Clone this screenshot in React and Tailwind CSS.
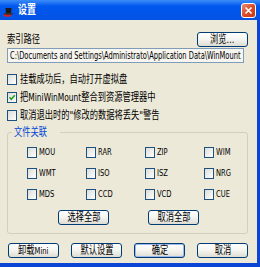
import React from 'react'

const FONT = "font-['Tahoma','DejaVu_Sans','Noto_Sans_CJK_SC',sans-serif]"

function T({ children, className = '', center = false, narrow = false }) {
  return (
    <span
      className={`inline-block whitespace-nowrap leading-none ${narrow ? 'scale-x-[0.67]' : 'scale-x-[0.75]'} ${center ? 'origin-center' : 'origin-left'} ${className}`}
    >
      {children}
    </span>
  )
}

function Check({ checked = false }) {
  return (
    <span className="relative w-[10px] h-[11px] shrink-0 border border-[#1C5180] bg-gradient-to-br from-[#DCDCD7] to-white">
      {checked && (
        <svg viewBox="0 0 8 9" className="absolute inset-0 w-[8px] h-[9px]">
          <path d="M1.5 4.2 L3.3 6.2 L6.8 2.2" stroke="#21A121" strokeWidth="1.6" fill="none" />
        </svg>
      )}
    </span>
  )
}

function Btn({ children, focused = false, className = '' }) {
  return (
    <div
      className={`h-[15px] w-[51px] rounded-[3px] border border-[#003C74] bg-gradient-to-b from-white via-[#F4F4F0] to-[#DEDCD3] flex items-center justify-center text-[11px] text-black ${focused ? 'shadow-[inset_0_0_0_1px_#9DB8EC]' : ''} ${className}`}
    >
      <T center>{children}</T>
    </div>
  )
}

function Row({ checked, children }) {
  return (
    <div className="h-[18px] flex items-center pl-[7px] gap-[3px]">
      <Check checked={checked} />
      <T className="text-[11px] text-black">{children}</T>
    </div>
  )
}

const TYPES = ['MOU', 'RAR', 'ZIP', 'WIM', 'WMT', 'ISO', 'ISZ', 'NRG', 'MDS', 'CCD', 'VCD', 'CUE']

export default function App() {
  return (
    <div className={`w-[260px] h-[267px] flex flex-col bg-[#0B45D6] overflow-hidden ${FONT}`}>
      {/* Title bar */}
      <div className="h-[20px] shrink-0 flex items-center pl-[3px] pr-[4px] bg-gradient-to-b from-[#3C8CF8] via-[#0058EE] via-30% to-[#0352E4]">
        <svg viewBox="0 0 11 10" className="w-[11px] h-[10px] mt-[3px]">
          <ellipse cx="4.5" cy="8" rx="4" ry="1.8" fill="#D42020" />
          <path d="M2.5 1 L8.5 1 L8 7.5 L3 7.5 Z" fill="#1A1A1A" />
          <rect x="1" y="6" width="9" height="1.5" fill="#333" />
        </svg>
        <T className="ml-[4px] text-[12px] font-bold text-white">设置</T>
        <div className="ml-auto w-[15px] h-[15px] rounded-[3px] border border-white bg-gradient-to-br from-[#E98A6F] via-[#DC4A25] to-[#C53A18] flex items-center justify-center">
          <svg viewBox="0 0 9 9" className="w-[9px] h-[9px]">
            <path d="M1.5 1.5 L7.5 7.5 M7.5 1.5 L1.5 7.5" stroke="white" strokeWidth="1.7" />
          </svg>
        </div>
      </div>

      {/* Client area */}
      <div className="flex-1 mr-[3px] mb-[4px] bg-[#ECE9D8] flex flex-col">
        <div className="mt-[12px] h-[15px] flex items-center justify-between pl-[7px] pr-[9px]">
          <T className="text-[11px] text-black">索引路径</T>
          <Btn>浏览...</Btn>
        </div>
        <div className="mt-[1px] ml-[7px] w-[237px] h-[15px] border border-[#7F9DB9] bg-[#F6F5EF] flex items-center pl-[2px] overflow-hidden">
          <T narrow className="text-[10px] text-black">C:\Documents and Settings\Administrato\Application Data\WinMount</T>
        </div>

        <div className="mt-[7px] flex flex-col">
          <Row>挂载成功后，自动打开虚拟盘</Row>
          <Row checked>
            把<span className="text-[10px]">MiniWinMount</span>整合到资源管理器中
          </Row>
          <Row>取消退出时的"修改的数据将丢失"警告</Row>
        </div>

        {/* File associations group */}
        <div className="relative mt-[8px] ml-[7px] w-[241px] h-[102px] border border-[#D0D0BF] rounded-[3px] pt-[9px]">
          <div className="absolute left-[4px] top-[-6px] px-[2px] bg-[#ECE9D8] h-[11px] flex items-center">
            <T className="text-[11px] text-[#0046D5]">文件关联</T>
          </div>
          <div className="grid grid-cols-[59px_59px_59px_59px] auto-rows-[21px] pl-[19px]">
            {TYPES.map((t) => (
              <div key={t} className="flex items-center gap-[2px]">
                <Check />
                <T className="text-[9px] text-black">{t}</T>
              </div>
            ))}
          </div>
          <div className="mt-[5px] flex pl-[50px] gap-[39px]">
            <Btn>选择全部</Btn>
            <Btn>取消全部</Btn>
          </div>
        </div>

        <div className="mt-[9px] flex pl-[8px] gap-[12px]">
          <Btn>卸载<span className="text-[9px]">Mini</span></Btn>
          <Btn>默认设置</Btn>
          <Btn focused>确定</Btn>
          <Btn>取消</Btn>
        </div>
      </div>
    </div>
  )
}
